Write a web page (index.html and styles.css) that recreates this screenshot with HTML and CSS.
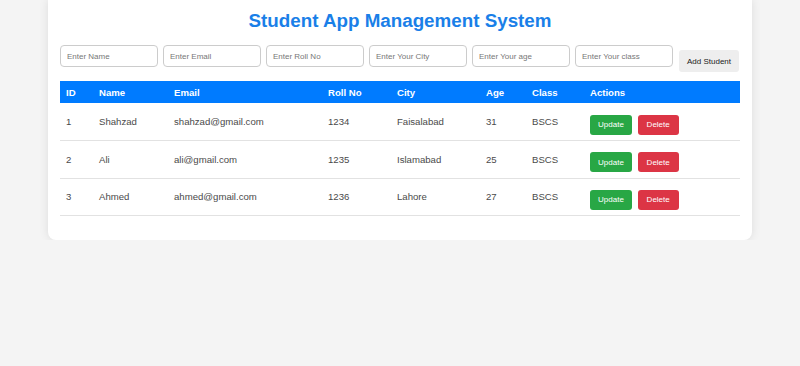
FILE: index.html
```html
<!DOCTYPE html>
<html lang="en">
<head>
    <meta charset="UTF-8">
    <meta name="viewport" content="width=device-width, initial-scale=1.0">
    <title>Student App Management System</title>
    <link rel="stylesheet" href="styles.css">
</head>
<body>
    <div class="container">
        <h1>Student App Management System</h1>
        <form class="student-form">
            <input type="text" placeholder="Enter Name">
            <input type="email" placeholder="Enter Email">
            <input type="text" placeholder="Enter Roll No">
            <input type="text" placeholder="Enter Your City">
            <input type="text" placeholder="Enter Your age">
            <input type="text" placeholder="Enter Your class">
            <button type="button" class="add-btn">Add Student</button>
        </form>
        <table class="student-table">
            <colgroup>
                <col class="col-id">
                <col class="col-name">
                <col class="col-email">
                <col class="col-roll">
                <col class="col-city">
                <col class="col-age">
                <col class="col-class">
                <col class="col-actions">
            </colgroup>
            <thead>
                <tr>
                    <th>ID</th>
                    <th>Name</th>
                    <th>Email</th>
                    <th>Roll No</th>
                    <th>City</th>
                    <th>Age</th>
                    <th>Class</th>
                    <th>Actions</th>
                </tr>
            </thead>
            <tbody>
                <tr>
                    <td>1</td>
                    <td>Shahzad</td>
                    <td>shahzad@gmail.com</td>
                    <td>1234</td>
                    <td>Faisalabad</td>
                    <td>31</td>
                    <td>BSCS</td>
                    <td>
                        <button class="update-btn">Update</button>
                        <button class="delete-btn">Delete</button>
                    </td>
                </tr>
                <tr>
                    <td>2</td>
                    <td>Ali</td>
                    <td>ali@gmail.com</td>
                    <td>1235</td>
                    <td>Islamabad</td>
                    <td>25</td>
                    <td>BSCS</td>
                    <td>
                        <button class="update-btn">Update</button>
                        <button class="delete-btn">Delete</button>
                    </td>
                </tr>
                <tr>
                    <td>3</td>
                    <td>Ahmed</td>
                    <td>ahmed@gmail.com</td>
                    <td>1236</td>
                    <td>Lahore</td>
                    <td>27</td>
                    <td>BSCS</td>
                    <td>
                        <button class="update-btn">Update</button>
                        <button class="delete-btn">Delete</button>
                    </td>
                </tr>
            </tbody>
        </table>
    </div>
</body>
</html>
```
FILE: styles.css
```css
* {
    margin: 0;
    padding: 0;
    box-sizing: border-box;
    font-family: "Liberation Sans", Arial, sans-serif;
}

body {
    background: #f4f4f4;
}

.container {
    width: 704px;
    margin: 0 auto;
    padding: 10px 12px 24px;
    background: white;
    border-radius: 0 0 8px 8px;
    box-shadow: 0 0 10px rgba(0, 0, 0, 0.1);
}

h1 {
    color: #1a7fe8;
    text-align: center;
    font-size: 18.8px;
    line-height: 22px;
    margin-bottom: 13px;
}

.student-form {
    display: flex;
    align-items: flex-start;
    gap: 5px;
    margin-bottom: 9px;
}

.student-form input {
    width: 98px;
    height: 22px;
    padding: 0 6px;
    border: 1px solid #ccc;
    border-radius: 4px;
    font-size: 8px;
}

.student-form input::placeholder {
    color: #777;
}

.add-btn {
    margin-top: 5px;
    margin-left: 1px;
    width: 60px;
    height: 22px;
    background: #eee;
    border: none;
    border-radius: 3px;
    font-size: 8px;
    color: #222;
}

.student-table {
    width: 680px;
    border-collapse: collapse;
    table-layout: fixed;
}

.col-id { width: 33px; }
.col-name { width: 75px; }
.col-email { width: 154px; }
.col-roll { width: 69px; }
.col-city { width: 89px; }
.col-age { width: 46px; }
.col-class { width: 58px; }
.col-actions { width: 156px; }

.student-table th {
    background: #007bff;
    color: white;
    text-align: left;
    font-size: 9.6px;
    height: 22px;
    padding: 0 6px;
}

.student-table td {
    font-size: 9.6px;
    color: #4a4a4a;
    height: 37.5px;
    padding: 0 6px;
    border-bottom: 1px solid #e2e2e2;
}

.update-btn,
.delete-btn {
    width: 42px;
    height: 20px;
    margin-top: 6px;
    border: none;
    border-radius: 3px;
    color: white;
    font-size: 8px;
    vertical-align: middle;
}

.update-btn {
    background: #28a745;
    margin-right: 3px;
}

.delete-btn {
    background: #dc3545;
    width: 41px;
}
```
